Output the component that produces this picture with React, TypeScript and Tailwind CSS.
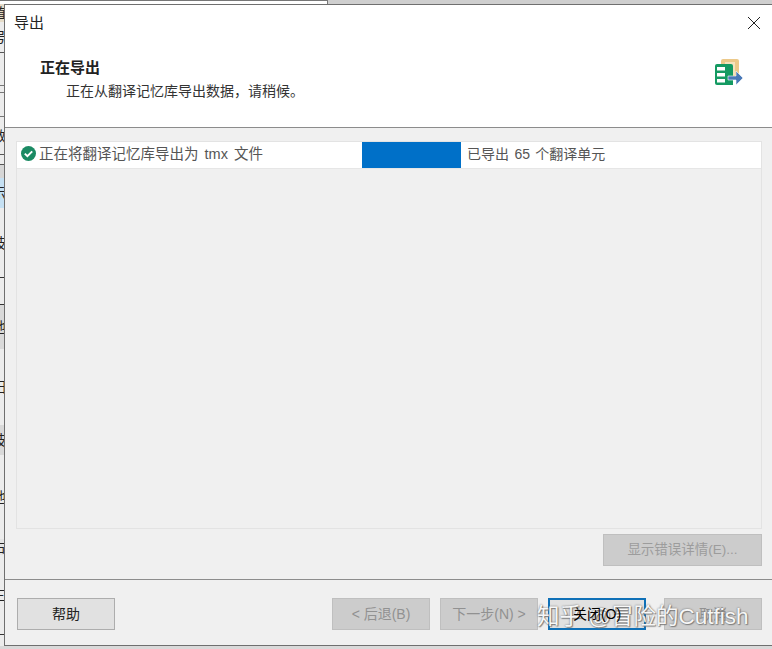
// left edge of the window behind the dialog, only a sliver of it is visible
const behindRows = [
  { cls: 'h-[18px] bg-[#e6dcc8]', text: '值' },
  { cls: 'h-[31px] border-b border-[#555]', text: '号' },
  { cls: 'h-[33px] border-b border-[#777]', text: '' },
  { cls: 'h-[7px] border-b border-[#777]', text: '' },
  { cls: 'h-[24px] border-b border-[#777]', text: '' },
  { cls: 'h-[38px] border-b border-[#555]', text: '数' },
  { cls: 'h-[10px] border-b border-[#555]', text: '' },
  { cls: 'h-[13px] bg-[#d6d6d6]', text: '' },
  { cls: 'h-[30px] bg-[#c5e0f3]', text: '示' },
  { cls: 'h-[70px] border-b border-[#333]', text: '技' },
  { cls: 'h-[27px] border-b border-[#333]', text: '' },
  { cls: 'h-[44px] bg-[#d9d9d9]', text: '他' },
  { cls: 'h-[76px]', text: '田' },
  { cls: 'h-[30px] bg-[#d9d9d9]', text: '技' },
  { cls: 'h-[84px]', text: '他' },
  { cls: 'h-[16px] bg-[#e4e4e4]', text: '占' },
  { cls: 'h-[80px] border-b border-[#333]', text: '三' },
  { cls: 'h-[11px]', text: '' },
];

function ExportIcon() {
  return (
    <svg width="30" height="30" viewBox="0 0 30 30">
      <rect x="7" y="1" width="18" height="19" rx="2" fill="#ecc98a" />
      <rect x="11" y="4" width="10" height="13" fill="#f5e2bd" />
      <path d="M1 8a2 2 0 0 1 2-2h14a2 2 0 0 1 2 2v19H3a2 2 0 0 1-2-2z" fill="#149a62" />
      <rect x="3" y="9" width="8" height="3.5" fill="#fff" />
      <rect x="3" y="15" width="8" height="3.5" fill="#fff" />
      <rect x="3" y="21" width="8" height="3.5" fill="#fff" />
      <path d="M14 18h8v-5l7 7-7 7v-5h-8z" fill="#4a79b8" stroke="#fff" strokeWidth="0.6" />
    </svg>
  );
}

function WizardButton({ label, disabled, focused }: { label: string; disabled?: boolean; focused?: boolean }) {
  if (focused) {
    return (
      <button className="w-[98px] h-[32px] bg-[#e1e1e1] border-2 border-[#0f70b7] text-[14px] text-black">
        <span className="relative z-10">{label}</span>
      </button>
    );
  }
  if (disabled) {
    return (
      <button className="w-[98px] h-[32px] bg-[#cccccc] border border-[#bfbfbf] text-[14px] text-[#919191]">
        {label}
      </button>
    );
  }
  return (
    <button className="w-[98px] h-[32px] bg-[#e1e1e1] border border-[#adadad] text-[14px] text-[#222]">
      {label}
    </button>
  );
}

export default function App() {
  return (
    <div className="relative w-[772px] h-[649px] overflow-hidden bg-[#d9d9d9] font-['Liberation_Sans','Noto_Sans_CJK_SC',sans-serif]">
      <div className="h-[4px] flex">
        <div className="w-[328px] bg-white border-t border-r border-[#777]" />
        <div className="flex-1 bg-[#cfcfcf]" />
      </div>
      <div className="flex h-[642px]">
        <div className="w-[4px] shrink-0 bg-[#ececec] overflow-hidden flex flex-col">
          {behindRows.map((row, i) => (
            <div key={i} className={`${row.cls} shrink-0 box-border flex items-center overflow-hidden`}>
              {row.text && <span className="-ml-[8px] text-[14px] leading-[16px] text-[#222] shrink-0">{row.text}</span>}
            </div>
          ))}
        </div>
        <div className="flex-1 flex flex-col bg-[#f0f0f0] border-l border-t border-b border-[#6f6f6f]">
          <div className="h-[122px] bg-white flex flex-col border-b border-[#8c8c8c] box-content">
            <div className="flex items-center justify-between h-[38px] pl-[9px] pr-[11px]">
              <span className="text-[15px] text-[#222] mt-[-1px]">导出</span>
              <svg width="14" height="14" viewBox="0 0 14 14" className="mt-[-3px]">
                <path d="M1 1l12 12M13 1L1 13" stroke="#222" strokeWidth="1" fill="none" />
              </svg>
            </div>
            <div className="flex justify-between pl-[35px] pr-[28px] pt-[15px]">
              <div>
                <div className="text-[15px] font-bold text-[#222] leading-[20px]">正在导出</div>
                <div className="text-[14px] text-[#333] leading-[20px] pl-[26px] mt-[3px]">正在从翻译记忆库导出数据，请稍候。</div>
              </div>
              <ExportIcon />
            </div>
          </div>

          <div className="flex-1 flex flex-col pl-[11px] pr-[10px] pt-[13px]">
            <div className="h-[388px] bg-[#f0f0f0] border border-[#e3e3e3]">
              <div className="flex h-[27px] bg-white border-b border-[#e6e6e6]">
                <div className="w-[345px] flex items-center gap-[3px] pl-[4px] text-[14.5px] [word-spacing:2px] text-[#555]">
                  <svg width="15" height="15" viewBox="0 0 15 15" className="mt-[-3px] shrink-0">
                    <circle cx="7.5" cy="7.5" r="7.5" fill="#1b8a63" />
                    <path d="M3.8 7.6l2.6 2.6 4.8-4.8" stroke="#fff" strokeWidth="2" fill="none" />
                  </svg>
                  <span>正在将翻译记忆库导出为 tmx 文件</span>
                </div>
                <div className="w-[99px] h-full bg-[#0070c8]" />
                <div className="flex items-center pl-[6px] pb-[2px] text-[14px] [word-spacing:1.5px] text-[#555]">已导出 65 个翻译单元</div>
              </div>
            </div>
            <div className="flex justify-end mt-[5px]">
              <button className="w-[159px] h-[32px] bg-[#cccccc] border border-[#bfbfbf] text-[13.5px] text-[#9c9c9c]">
                显示错误详情(E)...
              </button>
            </div>
          </div>

          <div className="h-[66px] border-t border-[#8c8c8c] bg-[#f0f0f0] flex items-start justify-between pt-[18px] pl-[12px] pr-[10px]">
            <WizardButton label="帮助" />
            <div className="flex gap-[10px]">
              <WizardButton label="< 后退(B)" disabled />
              <WizardButton label="下一步(N) >" disabled />
              <WizardButton label="关闭(O)" focused />
              <div className="ml-[8px]">
                <WizardButton label="取消" disabled />
              </div>
            </div>
          </div>
        </div>
      </div>
      <div className="absolute left-[537px] top-[601px] text-[22.5px] leading-[32px] text-white/95 [text-shadow:0_0_2px_#666,1px_1px_1px_#888] whitespace-nowrap">
        知乎 @冒险的Cutfish
      </div>
    </div>
  );
}
